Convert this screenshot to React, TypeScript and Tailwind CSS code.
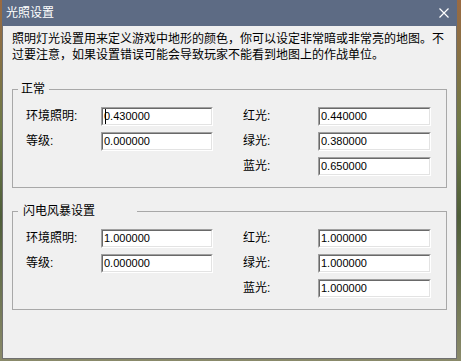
import React from 'react'

type Field = { label: string; value: string; caret?: boolean }

const groups: {
  id: number
  title: string
  legendClass: string
  left: Field[]
  right: Field[]
}[] = [
  {
    id: 1,
    title: '正常',
    legendClass: 'ml-[5px] pl-[3px] pr-[4px]',
    left: [
      { label: '环境照明:', value: '0.430000', caret: true },
      { label: '等级:', value: '0.000000' },
    ],
    right: [
      { label: '红光:', value: '0.440000' },
      { label: '绿光:', value: '0.380000' },
      { label: '蓝光:', value: '0.650000' },
    ],
  },
  {
    id: 2,
    title: '闪电风暴设置',
    legendClass: 'ml-[5px] pl-[5px] pr-[42px]',
    left: [
      { label: '环境照明:', value: '1.000000' },
      { label: '等级:', value: '0.000000' },
    ],
    right: [
      { label: '红光:', value: '1.000000' },
      { label: '绿光:', value: '1.000000' },
      { label: '蓝光:', value: '1.000000' },
    ],
  },
]

function TextBox({ value, caret, width }: { value: string; caret?: boolean; width: string }) {
  return (
    <div className={`${width} h-[19px] border-t border-l border-t-[#a0a0a0] border-l-[#a0a0a0] border-b border-r border-b-white border-r-white`}>
      <div className="h-full border-t border-l border-t-[#696969] border-l-[#696969] border-b border-r border-b-[#e3e3e3] border-r-[#e3e3e3] bg-white flex items-center pl-[1px]">
        <span className="relative font-['Liberation_Sans',sans-serif] text-[11px] leading-[13px] text-black">
          {caret && <span className="absolute left-[1px] -top-[1px] h-[15px] w-[1px] bg-black" />}
          {value}
        </span>
      </div>
    </div>
  )
}

function Row({ field, width }: { field: Field; width: string }) {
  return (
    <div className="flex items-center h-[19px]">
      <span className="w-[75px] -mt-[2px] text-[12px] leading-[16px]">{field.label}</span>
      <TextBox value={field.value} caret={field.caret} width={width} />
    </div>
  )
}

export default function App() {
  return (
    <div className="w-[461px] h-[361px] pl-[2px] bg-[linear-gradient(180deg,#9a6a42_0%,#6f7a48_35%,#4f5e3a_60%,#8a8a6a_100%)] font-['Liberation_Sans','Noto_Sans_CJK_SC',sans-serif] text-black">
      <div className="w-[455px] h-[359px] flex flex-col">
        <div className="h-[26px] bg-[#5d6b84] flex items-center justify-between pl-[4px] pr-[8px]">
          <span className="text-white text-[12px] leading-[16px]">光照设置</span>
          <svg width="10" height="10" viewBox="0 0 10 10">
            <path d="M0.5 0.5 L9.5 9.5 M9.5 0.5 L0.5 9.5" stroke="white" strokeWidth="1.2" fill="none" />
          </svg>
        </div>

        <div className="flex-1 bg-[#f0f0f0] border-x border-b border-[#707070]">
          <p className="pt-[5px] pl-[9px] text-[12px] leading-[16px] whitespace-nowrap">
            照明灯光设置用来定义游戏中地形的颜色，你可以设定非常暗或非常亮的地图。不
            <br />
            过要注意，如果设置错误可能会导致玩家不能看到地图上的作战单位。
          </p>

          {groups.map((group, index) => (
            <fieldset
              key={group.id}
              className={`ml-[9px] w-[435px] border border-[#a8a8a8] ${index === 0 ? 'mt-[18px]' : 'mt-[15px]'}`}
            >
              <legend className={`${group.legendClass} text-[12px] leading-[16px]`}>{group.title}</legend>
              <div className="flex gap-[30px] pl-[13px] pt-[10px] pb-[11px]">
                <div className="flex flex-col gap-[6px]">
                  {group.left.map((f) => (
                    <Row key={f.label} field={f} width="w-[112px]" />
                  ))}
                </div>
                <div className="flex flex-col gap-[6px]">
                  {group.right.map((f) => (
                    <Row key={f.label} field={f} width="w-[113px]" />
                  ))}
                </div>
              </div>
            </fieldset>
          ))}
        </div>
      </div>
    </div>
  )
}
